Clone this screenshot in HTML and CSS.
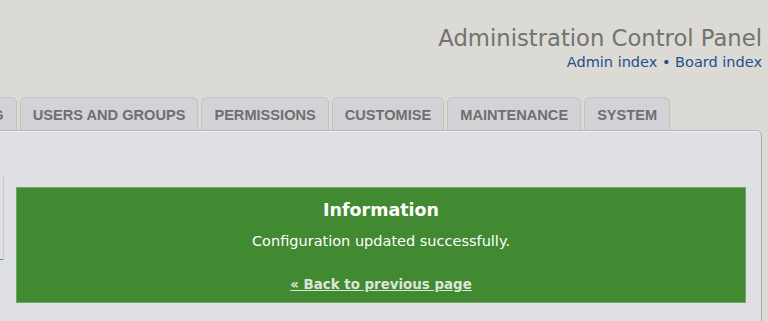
FILE: index.html
```html
<!DOCTYPE html>
<html lang="en">
<head>
<meta charset="utf-8">
<title>Administration Control Panel</title>
<link rel="stylesheet" href="styles.css">
</head>
<body>
<div class="page">
  <header class="header">
    <h1 class="title">Administration Control Panel</h1>
    <p class="links"><a href="#">Admin index</a> &bull; <a href="#">Board index</a></p>
  </header>
  <nav class="tabs">
    <a class="tab" href="#">Posting</a>
    <a class="tab" href="#">Users and groups</a>
    <a class="tab" href="#">Permissions</a>
    <a class="tab" href="#">Customise</a>
    <a class="tab" href="#">Maintenance</a>
    <a class="tab" href="#">System</a>
  </nav>
  <main class="panel">
    <div class="menu"></div>
    <div class="content">
      <div class="success">
        <h2 class="success-title">Information</h2>
        <p class="success-text">Configuration updated successfully.</p>
        <p class="success-back"><a href="#">&laquo; Back to previous page</a></p>
      </div>
    </div>
  </main>
</div>
</body>
</html>
```
FILE: styles.css
```css
html, body {
  margin: 0;
  padding: 0;
  height: 100%;
  overflow: hidden;
}
body {
  background: #dcdad5;
  font-family: "DejaVu Sans", Verdana, sans-serif;
}
.page {
  display: flex;
  flex-direction: column;
  height: 100%;
}
.header {
  display: flex;
  flex-direction: column;
  align-items: flex-end;
  padding: 24px 6px 0 0;
}
.title {
  margin: 0;
  font-weight: normal;
  font-size: 22.7px;
  line-height: 28px;
  color: #727272;
}
.links {
  margin: 1px 0 0;
  font-size: 14.5px;
  line-height: 18px;
  color: #1f4f8e;
}
.links a {
  color: #1f4f8e;
  text-decoration: none;
}
.tabs {
  display: flex;
  gap: 3px;
  margin: 26px 0 0 -75px;
  height: 33px;
}
.tab {
  display: flex;
  align-items: center;
  padding: 1px 12px 0;
  background: #d3d3d7;
  border: 1px solid #c3c3c3;
  border-bottom: none;
  border-radius: 6px 6px 0 0;
  font-family: "Liberation Sans", Arial, sans-serif;
  font-weight: bold;
  font-size: 14.6px;
  text-transform: uppercase;
  color: #6f6f6f;
  text-decoration: none;
  white-space: nowrap;
}
.panel {
  flex: 1;
  display: flex;
  margin-right: 6px;
  background: #dfe0e4;
  border-top: 1px solid #b4b4b4;
  border-right: 1px solid #a9a9a9;
  border-top-right-radius: 6px;
  box-shadow: inset 0 1px 0 #f0f0f2;
}
.menu {
  width: 3px;
  height: 86px;
  margin-top: 44px;
  border-right: 1px solid #c8c9cd;
  position: relative;
}
.menu::after {
  content: "";
  position: absolute;
  left: 0;
  bottom: 1px;
  width: 3px;
  height: 1px;
  background: #6b86ad;
}
.content {
  flex: 1;
  padding: 56px 15px 0 12px;
}
.success {
  background: #418a31;
  border: 1px solid #74a568;
  height: 114px;
  box-sizing: content-box;
  display: flex;
  flex-direction: column;
  align-items: center;
  color: #ffffff;
}
.success-title {
  margin: 11px 0 0;
  font-size: 17.5px;
  line-height: 22px;
  font-weight: bold;
}
.success-text {
  margin: 11px 0 0;
  font-size: 14.5px;
  line-height: 18px;
}
.success-back {
  margin: 26px 0 0;
  font-size: 13.4px;
  line-height: 18px;
  font-weight: bold;
}
.success-back a {
  color: #dde5da;
  text-decoration: underline;
}
```
